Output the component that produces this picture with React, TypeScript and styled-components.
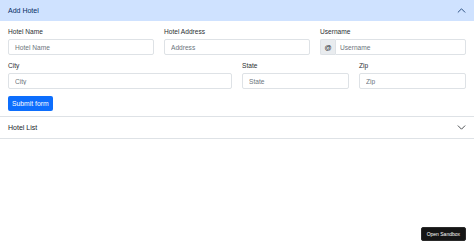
import React, { useState } from 'react';
import styled, { createGlobalStyle } from 'styled-components';

const GlobalStyle = createGlobalStyle`
  * { box-sizing: border-box; }
  body {
    margin: 0;
    background: #fff;
    font-family: "Liberation Sans", Arial, sans-serif;
    color: #212529;
  }
`;

const Accordion = styled.div`
  width: 100%;
`;

const Item = styled.div`
  border-bottom: 1px solid #dee2e6;
`;

const Header = styled.button<{ $open: boolean }>`
  width: 100%;
  height: 21px;
  display: flex;
  align-items: center;
  justify-content: space-between;
  padding: 0 8px;
  border: none;
  background: ${(p) => (p.$open ? '#cfe2ff' : '#fff')};
  color: ${(p) => (p.$open ? '#052c65' : '#212529')};
  font-family: inherit;
  font-size: 7px;
  cursor: pointer;
  text-align: left;
`;

const Chevron = styled.svg<{ $open: boolean }>`
  width: 9px;
  height: 9px;
  transform: ${(p) => (p.$open ? 'rotate(180deg)' : 'none')};
`;

const Body = styled.form`
  padding: 7px 8px 5px;
  display: flex;
  flex-direction: column;
  gap: 7px;
`;

const Row = styled.div<{ $cols: string }>`
  display: grid;
  grid-template-columns: ${(p) => p.$cols};
  column-gap: 10px;
`;

const Field = styled.div`
  display: flex;
  flex-direction: column;
`;

const Label = styled.label`
  font-size: 6.6px;
  line-height: 8px;
  margin-bottom: 3px;
  color: #2b2f33;
`;

const Input = styled.input`
  width: 100%;
  height: 16px;
  padding: 0 6px;
  border: 1px solid #dee2e6;
  border-radius: 2px;
  font-family: inherit;
  font-size: 6.6px;
  color: #212529;
  background: #fff;
  outline: none;

  &::placeholder {
    color: #6c757d;
  }
`;

const Group = styled.div`
  display: flex;
  height: 16px;

  ${Input} {
    border-top-left-radius: 0;
    border-bottom-left-radius: 0;
    padding-left: 4px;
  }
`;

const Addon = styled.span`
  width: 15px;
  flex-shrink: 0;
  display: flex;
  align-items: center;
  justify-content: center;
  background: #e9ecef;
  border: 1px solid #dee2e6;
  border-right: none;
  border-radius: 2px 0 0 2px;
  font-size: 7px;
`;

const Submit = styled.button`
  align-self: flex-start;
  height: 15px;
  padding: 0 4px;
  border: none;
  border-radius: 2px;
  background: #0d6efd;
  color: #fff;
  font-family: inherit;
  font-size: 6.8px;
  cursor: pointer;
`;

const SandboxButton = styled.button`
  position: fixed;
  right: 8px;
  bottom: 7px;
  height: 14px;
  padding: 0 5px;
  background: #151515;
  border: 1px solid #2a2a2a;
  border-radius: 2px;
  color: #fff;
  font-family: inherit;
  font-size: 5px;
`;

const ChevronIcon = ({ open }: { open: boolean }) => (
  <Chevron $open={open} viewBox="0 0 16 16" fill="none">
    <path d="M2 5l6 6 6-6" stroke="currentColor" strokeWidth="1.4" strokeLinecap="round" strokeLinejoin="round" />
  </Chevron>
);

export default function App() {
  const [open, setOpen] = useState<'add' | 'list' | null>('add');

  return (
    <>
      <GlobalStyle />
      <Accordion>
        <Item>
          <Header $open={open === 'add'} onClick={() => setOpen(open === 'add' ? null : 'add')}>
            Add Hotel
            <ChevronIcon open={open === 'add'} />
          </Header>
          {open === 'add' && (
            <Body onSubmit={(e) => e.preventDefault()}>
              <Row $cols="repeat(3, 1fr)">
                <Field>
                  <Label>Hotel Name</Label>
                  <Input placeholder="Hotel Name" />
                </Field>
                <Field>
                  <Label>Hotel Address</Label>
                  <Input placeholder="Address" />
                </Field>
                <Field>
                  <Label>Username</Label>
                  <Group>
                    <Addon>@</Addon>
                    <Input placeholder="Username" />
                  </Group>
                </Field>
              </Row>
              <Row $cols="calc(50% - 5px) 1fr 1fr">
                <Field>
                  <Label>City</Label>
                  <Input placeholder="City" />
                </Field>
                <Field>
                  <Label>State</Label>
                  <Input placeholder="State" />
                </Field>
                <Field>
                  <Label>Zip</Label>
                  <Input placeholder="Zip" />
                </Field>
              </Row>
              <Submit type="submit">Submit form</Submit>
            </Body>
          )}
        </Item>
        <Item>
          <Header $open={open === 'list'} onClick={() => setOpen(open === 'list' ? null : 'list')}>
            Hotel List
            <ChevronIcon open={open === 'list'} />
          </Header>
        </Item>
      </Accordion>
      <SandboxButton>Open Sandbox</SandboxButton>
    </>
  );
}
